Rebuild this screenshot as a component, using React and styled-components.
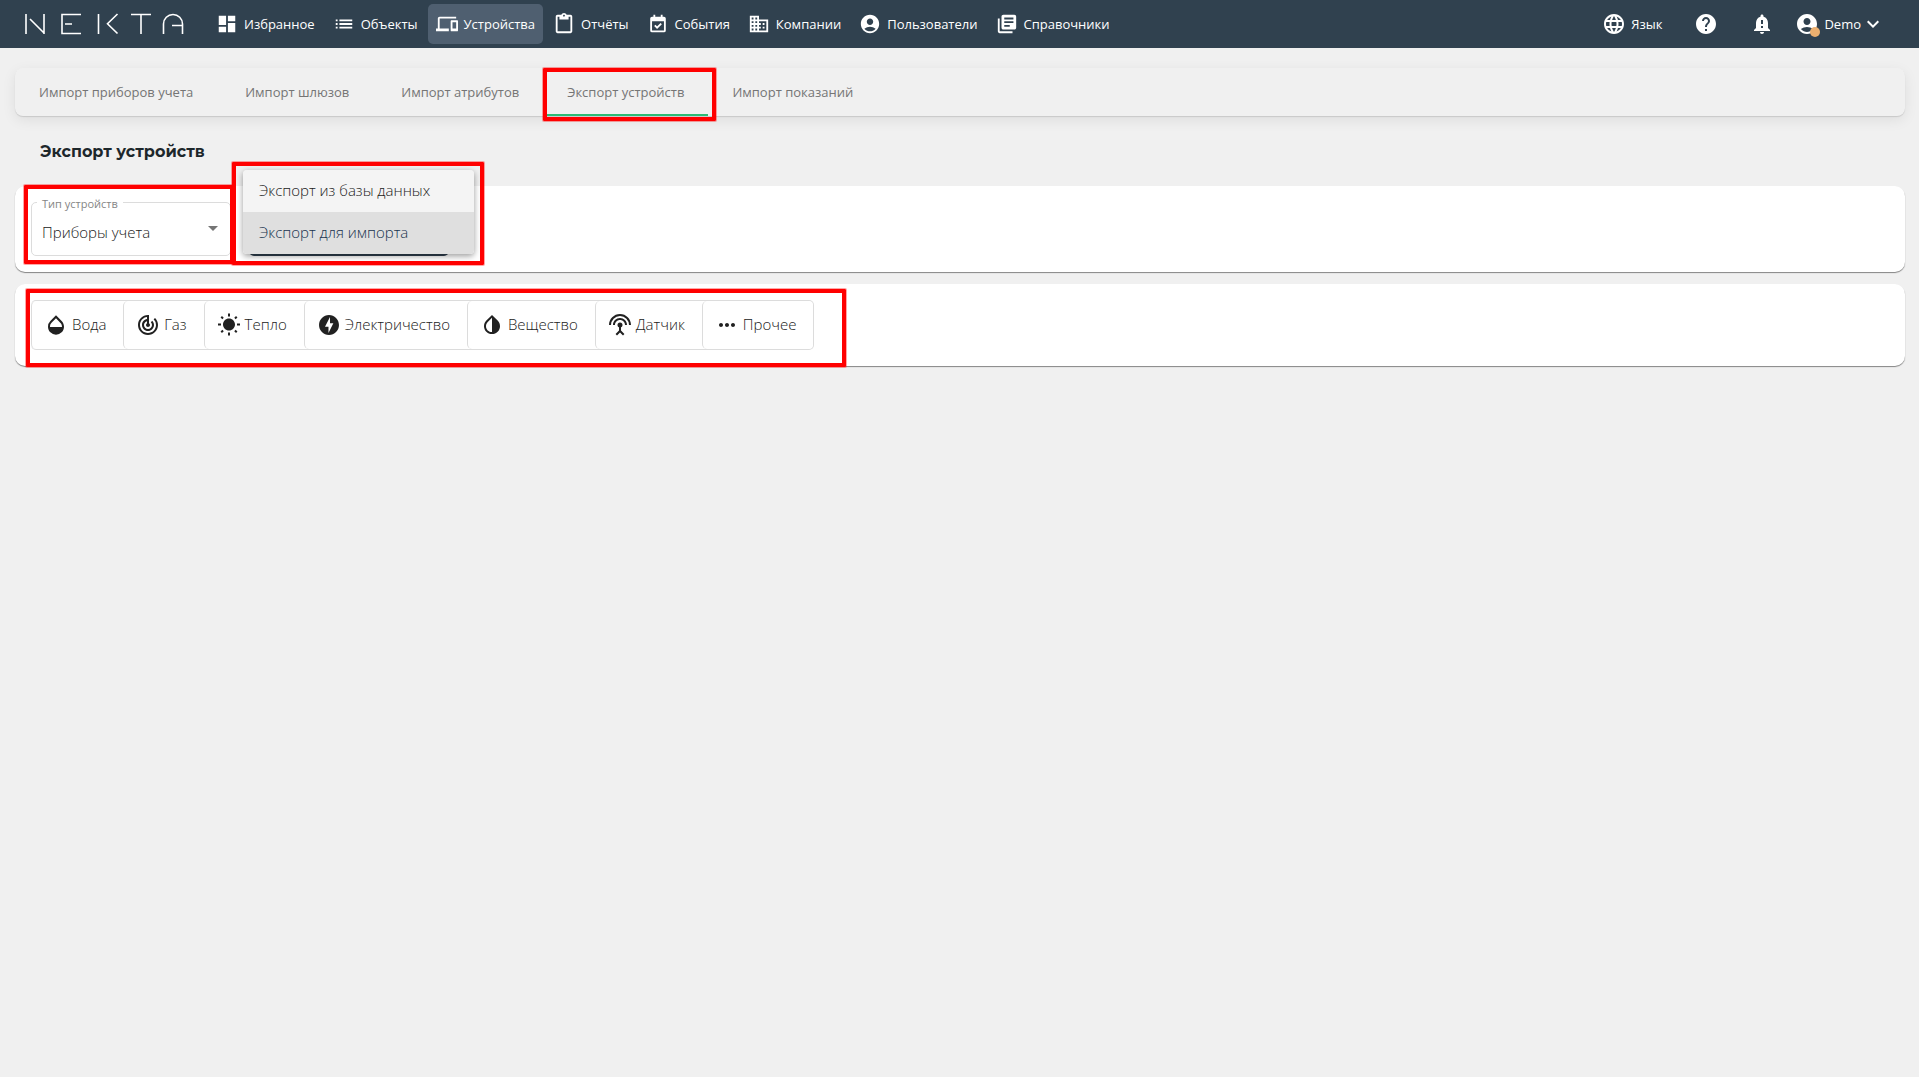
import React, { useState } from "react";
import styled, { createGlobalStyle, css } from "styled-components";
import {
  MdDashboard, MdList, MdDevices, MdContentPaste, MdBusiness,
  MdAccountCircle, MdLibraryBooks, MdLanguage, MdHelp, MdNotificationImportant,
  MdKeyboardArrowDown, MdArrowDropDown, MdOpacity, MdTrackChanges, MdWbSunny,
  MdOfflineBolt, MdInvertColors, MdSettingsInputAntenna, MdMoreHoriz,
} from "react-icons/md";

const GlobalStyle = createGlobalStyle`
  *, *::before, *::after { box-sizing: border-box; }
  body {
    margin: 0;
    background: #f0f0f0;
    color: #212121;
    font-family: "Open Sans", "Noto Sans", sans-serif;
    font-size: 15px;
  }
  button, select { font: inherit; color: inherit; }
  svg { flex: none; display: block; }
`;

const Header = styled.header`
  display: flex;
  align-items: center;
  height: 48px;
  padding: 0 34px 0 25px;
  background: #30414f;
  color: #fff;
  font-size: 13px;
`;

const LogoLink = styled.a`
  display: block;
  width: 183px;
`;

const Nav = styled.nav`
  display: flex;
  gap: 2px;
`;

const NavLink = styled.a`
  display: flex;
  align-items: center;
  gap: 6px;
  height: 40px;
  padding: 0 8px;
  border-radius: 5px;
  color: #fff;
  text-decoration: none;
  white-space: nowrap;
  background: ${(p) => (p.$active ? "#4f5f70" : "transparent")};
`;

const Tools = styled.div`
  display: flex;
  align-items: center;
  gap: 32px;
  margin-left: auto;
`;

const ToolButton = styled.button`
  display: flex;
  align-items: center;
  gap: 5px;
  padding: 0;
  border: 0;
  background: none;
`;

const UserButton = styled(ToolButton)`
  margin-left: -11px;
  gap: 0;
`;

const Avatar = styled.span`
  position: relative;
  margin-right: 5px;

  &::after {
    content: "";
    position: absolute;
    right: -1px;
    bottom: -1px;
    width: 10px;
    height: 10px;
    border-radius: 50%;
    background: #ecb070;
  }
`;

const Main = styled.main`
  padding: 20px 14px 20px 15px;
`;

const TabBar = styled.div`
  display: flex;
  height: 48px;
  border-radius: 8px;
  box-shadow: 0 1px 1px rgba(0, 0, 0, 0.12), 0 4px 14px rgba(0, 0, 0, 0.08);
`;

const Tab = styled.button`
  position: relative;
  min-width: 160px;
  padding: 2px 24px 0;
  border: 0;
  border-bottom: 2px solid ${(p) => (p.$active ? "#2bbb75" : "transparent")};
  background: none;
  color: #757575;
  font-size: 13px;
`;

const Title = styled.h1`
  margin: 0;
  padding: 25px 25px 23px;
  font-family: Montserrat, Inter, sans-serif;
  font-size: 16px;
  font-weight: 700;
  line-height: 22px;
  color: #1d272b;
`;

const Card = styled.section`
  display: flex;
  gap: 18px;
  padding: 16px;
  margin-bottom: 12px;
  border-radius: 10px;
  background: #fff;
  box-shadow: 0 1px 1px rgba(0, 0, 0, 0.45);
`;

const Field = styled.div`
  position: relative;
  width: 200px;
  height: 54px;
`;

const FieldLabel = styled.label`
  position: absolute;
  top: -6px;
  left: 6px;
  padding: 0 5px;
  background: #fff;
  color: #858585;
  font-size: 11px;
  line-height: 16px;
`;

const Select = styled.select`
  appearance: none;
  width: 100%;
  height: 100%;
  padding: 6px 32px 0 10px;
  border: ${(p) => (p.$focused ? "2px solid #30404f" : "1px solid #dcdcdc")};
  border-radius: 5px;
  outline: none;
  background: #fff;
  font-weight: 300;
`;

const Caret = styled(MdArrowDropDown)`
  position: absolute;
  top: 14px;
  right: 6px;
  color: #757575;
  pointer-events: none;
`;

const Menu = styled.div`
  position: absolute;
  top: -32px;
  left: -6px;
  width: 231px;
  overflow: hidden;
  border-radius: 4px;
  box-shadow: 0 2px 6px rgba(0, 0, 0, 0.4);
`;

const MenuItem = styled.button`
  display: block;
  width: 100%;
  height: 42px;
  padding: 0 16px 2px;
  border: 0;
  text-align: left;
  font-weight: 300;
  ${(p) => (p.$selected ? css`
    background: #dfdfdf;
    color: #17324d;
  ` : css`
    background: #f4f4f4;
    color: #212121;
  `)}
`;

const Categories = styled.div`
  position: relative;
  display: flex;
  border: 1px solid #dcdcdc;
  border-left: 0;
  border-radius: 5px;
`;

const Category = styled.button`
  display: flex;
  align-items: center;
  gap: 4px;
  height: 48px;
  padding: 0 17px 0 12px;
  border: 0;
  border-left: 1px solid #dcdcdc;
  border-radius: 5px;
  background: #fff;
  color: #212121;
  font-weight: 300;
`;

const CategoryName = styled.span`
  padding-bottom: 2px;
`;

const Frame = styled.span`
  position: absolute;
  z-index: 2;
  inset: ${(p) => p.$inset};
  border: 4px solid #ff0000;
  border-radius: 1px;
  box-shadow: 0 0 0 1px rgba(255, 0, 0, 0.35);
  pointer-events: none;
`;

function CalendarCheck({ size }) {
  return (
    <svg width={size} height={size} viewBox="0 0 24 24" fill="currentColor">
      <path
        fillRule="evenodd"
        d="M7 2h2v2h6V2h2v2h1.500a2 2 0 0 1 2 2v13a2 2 0 0 1-2 2h-13a2 2 0 0 1-2-2V6a2 2 0 0 1 2-2H7zM5.500 9v10h13V9z"
      />
      <path d="M8.500 13.500l2.500 2.500 4.500-4.500" fill="none" stroke="currentColor" strokeWidth="2" />
    </svg>
  );
}

const navItems = [
  [MdDashboard, "Избранное"],
  [MdList, "Объекты"],
  [MdDevices, "Устройства"],
  [MdContentPaste, "Отчёты"],
  [CalendarCheck, "События"],
  [MdBusiness, "Компании"],
  [MdAccountCircle, "Пользователи"],
  [MdLibraryBooks, "Справочники"],
];

const tabs = [
  "Импорт приборов учета",
  "Импорт шлюзов",
  "Импорт атрибутов",
  "Экспорт устройств",
  "Импорт показаний",
];

const exportKinds = ["Экспорт из базы данных", "Экспорт для импорта"];

const categories = [
  [MdOpacity, "Вода"],
  [MdTrackChanges, "Газ"],
  [MdWbSunny, "Тепло"],
  [MdOfflineBolt, "Электричество"],
  [MdInvertColors, "Вещество"],
  [MdSettingsInputAntenna, "Датчик"],
  [MdMoreHoriz, "Прочее"],
];

function Logo() {
  return (
    <svg width="160" height="22" viewBox="0 0 160 22" fill="none" stroke="#fff" strokeWidth="1.6">
      <path d="M1 1v20M5 6l14 14M19 1v20" />
      <path d="M56 1.5H37v19h19M40 11h7" />
      <path d="M73.5 1v20M92.500 1l-10 9.700 10 9.800" />
      <path d="M106 1.500h20M116 1.500V21" />
      <path d="M138.500 21V11a9.500 9.500 0 0 1 19 0v10M147 12.500h10.500" />
    </svg>
  );
}

export default function App() {
  const [tab, setTab] = useState(3);
  const [kind, setKind] = useState(1);

  return (
    <>
      <GlobalStyle />
      <Header>
        <LogoLink href="#" aria-label="Nekta"><Logo /></LogoLink>
        <Nav>
          {navItems.map(([Icon, name], i) => (
            <NavLink key={name} href="#" $active={i === 2}>
              <Icon size={22} />
              {name}
            </NavLink>
          ))}
        </Nav>
        <Tools>
          <ToolButton><MdLanguage size={24} />Язык</ToolButton>
          <ToolButton aria-label="Справка"><MdHelp size={24} /></ToolButton>
          <ToolButton aria-label="Уведомления"><MdNotificationImportant size={24} /></ToolButton>
          <UserButton>
            <Avatar><MdAccountCircle size={24} /></Avatar>
            Demo
            <MdKeyboardArrowDown size={24} stroke="currentColor" />
          </UserButton>
        </Tools>
      </Header>
      <Main>
        <TabBar role="tablist">
          {tabs.map((name, i) => (
            <Tab key={name} role="tab" aria-selected={tab === i} $active={tab === i} onClick={() => setTab(i)}>
              {name}
              {tab === i && <Frame $inset="0 -8px -7px 0" />}
            </Tab>
          ))}
        </TabBar>
        <Title>Экспорт устройств</Title>
        <Card>
          <Field>
            <FieldLabel htmlFor="device-type">Тип устройств</FieldLabel>
            <Select id="device-type">
              <option>Приборы учета</option>
            </Select>
            <Caret size={24} />
            <Frame $inset="-17px -3px -8px -7px" />
          </Field>
          <Field>
            <Select
              aria-label="Вид экспорта"
              $focused
              value={exportKinds[kind]}
              onChange={(e) => setKind(exportKinds.indexOf(e.target.value))}
            >
              {exportKinds.map((name) => <option key={name}>{name}</option>)}
            </Select>
            <Menu role="listbox">
              {exportKinds.map((name, i) => (
                <MenuItem key={name} role="option" aria-selected={kind === i} $selected={kind === i} onClick={() => setKind(i)}>
                  {name}
                </MenuItem>
              ))}
            </Menu>
            <Frame $inset="-40px -35px -9px -17px" />
          </Field>
        </Card>
        <Card>
          <Categories>
            {categories.map(([Icon, name]) => (
              <Category key={name}>
                <Icon size={24} />
                <CategoryName>{name}</CategoryName>
              </Category>
            ))}
            <Frame $inset="-12px -33px -18px -5px" />
          </Categories>
        </Card>
      </Main>
    </>
  );
}
